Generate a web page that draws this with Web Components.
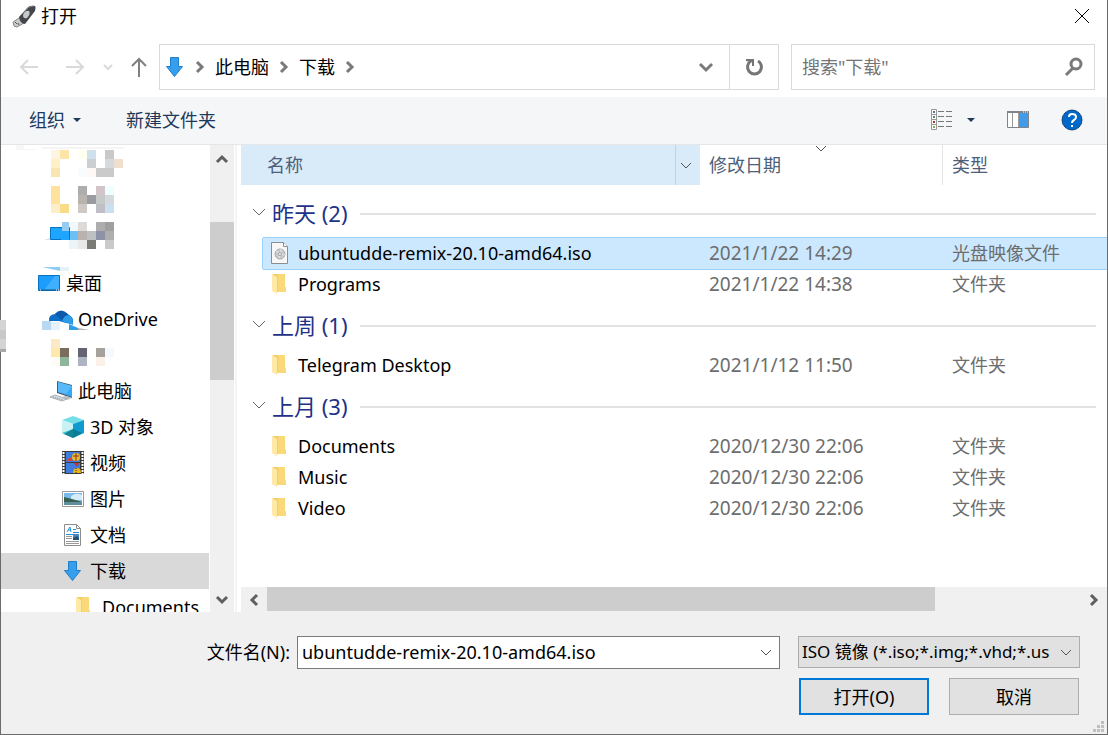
<!DOCTYPE html>
<html lang="zh-CN">
<head>
<meta charset="utf-8">
<meta name="viewport" content="width=device-width, initial-scale=1">
<title>打开</title>
<style>
    html, body {
        margin: 0;
        height: 100%;
    }
    body {
        font: 18px/24px "Noto Sans", "Noto Sans CJK SC", sans-serif;
        color: #000;
        background: #fff;
    }
</style>
</head>
<body>

<file-dialog>
    <title-bar slot="title">打开</title-bar>
    <nav-bar slot="nav"></nav-bar>
    <command-bar slot="commands"></command-bar>
    <nav-tree slot="tree">
        <tree-mosaic part-name="top"></tree-mosaic>
        <tree-item icon="desktop" level="0">桌面</tree-item>
        <tree-item icon="onedrive" level="1">OneDrive</tree-item>
        <tree-mosaic part-name="row"></tree-mosaic>
        <tree-item icon="pc" level="1">此电脑</tree-item>
        <tree-item icon="cube" level="2">3D 对象</tree-item>
        <tree-item icon="film" level="2">视频</tree-item>
        <tree-item icon="picture" level="2">图片</tree-item>
        <tree-item icon="document" level="2">文档</tree-item>
        <tree-item icon="download" level="2" selected>下载</tree-item>
        <tree-item icon="folder" level="3">Documents</tree-item>
    </nav-tree>
    <file-list slot="files"></file-list>
    <dialog-footer slot="footer"></dialog-footer>
</file-dialog>

<script>
// every icon is [viewBox width, viewBox height, markup]
const icons = {
    usb: [24, 24, `
        <path d="M1 18l6-4 5 5-7 4-3-1z" fill="#c9c9c9" stroke="#8b8b8b"/>
        <path d="M3 18l2 2M6 19l1 2" stroke="#555"/>
        <path d="M7 13L16 3q3-2 7-1 1 1 0 5L13 20q-5 0-6-7z" fill="#43474b"/>
        <path d="M8 12l9-9 5-1" fill="none" stroke="#7d8184"/>
        <path d="M11 11q2-5 6-4 2 3-2 7-4 1-4-3z" fill="#c8c8c8"/>`],
    close: [16, 16, `<path d="M1 1l14 14M15 1L1 15" stroke="#000" fill="none"/>`],
    back: [20, 20, `<path d="M19 10H2M9 3L2 10l7 7" fill="none" stroke="#d9d9d9" stroke-width="2"/>`],
    forward: [20, 20, `<path d="M1 10h17M11 3l7 7-7 7" fill="none" stroke="#d9d9d9" stroke-width="2"/>`],
    recent: [10, 10, `<path d="M1 3l4 4 4-4" fill="none" stroke="#d9d9d9" stroke-width="2"/>`],
    up: [16, 20, `<path d="M8 20V2M1 9l7-7 7 7" fill="none" stroke="#808080" stroke-width="2"/>`],
    crumb: [8, 12, `<path d="M1 1l5 5-5 5" fill="none" stroke="#7a7a7a" stroke-width="3"/>`],
    drop: [14, 10, `<path d="M1 2l6 6 6-6" fill="none" stroke="#7a7a7a" stroke-width="3"/>`],
    refresh: [18, 18, `<path d="M13 3a7 7 0 1 1-7 0" fill="none" stroke="#757575" stroke-width="3"/><path d="M1 1h8v7H7L7 4 1 3z" fill="#757575"/>`],
    search: [18, 18, `<circle cx="12" cy="6" r="5" fill="none" stroke="#7a7a7a" stroke-width="3"/><path d="M9 10l-7 7" stroke="#7a7a7a" stroke-width="3"/>`],
    caret: [8, 4, `<path d="M0 0h8L4 4z" fill="#1e395b"/>`],
    chevron: [14, 8, `<path d="M1 1l6 6 6-6" fill="none" stroke="#666"/>`],
    smallChevron: [12, 7, `<path d="M1 1l5 5 5-5" fill="none" stroke="#555"/>`],
    arrowUp: [12, 10, `<path d="M1 9l5-5 5 5" fill="none" stroke="#5f5f5f" stroke-width="3"/>`],
    arrowDown: [12, 10, `<path d="M1 3l5 5 5-5" fill="none" stroke="#5f5f5f" stroke-width="3"/>`],
    arrowLeft: [10, 12, `<path d="M8 1L3 6l5 5" fill="none" stroke="#5f5f5f" stroke-width="3"/>`],
    arrowRight: [10, 12, `<path d="M2 1l5 5-5 5" fill="none" stroke="#5f5f5f" stroke-width="3"/>`],
    views: [22, 22, `
        <path d="M.5 .5h5v20h-5zM.5 5.500h5M.5 10.500h5M.5 15.500h5" fill="#fff" stroke="#999"/>
        <path d="M2 2h2v2H2z" fill="#49749b"/><path d="M2 7h2v2H2z" fill="#4b8a72"/><path d="M2 12h2v2H2z" fill="#b8302a"/><path d="M2 17h2v2H2z" fill="#8cae5a"/>
        <path d="M7 2.500h6m2 0h6M7 7.500h6m2 0h6M7 12.500h6m2 0h6M7 17.500h6m2 0h6" stroke="#777"/>`],
    preview: [22, 18, `
        <path d="M.5 .5h21v16H.5z" fill="#fff" stroke="#808389"/>
        <path d="M0 0h22v2H0z" fill="#808389"/><path d="M16 1h1m1 0h1m1 0h1" stroke="#fff"/>
        <path d="M5.500 2v14M11.500 2v14" stroke="#9b9b9b"/><path d="M12 2h9v14h-9z" fill="#429be6"/>`],
    help: [22, 22, `
        <circle cx="11" cy="11" r="10" fill="#0068c9" stroke="#174b80"/>
        <path d="M8 8q0-3 3-3 4 0 4 3 0 2-2 3t-2 3" fill="none" stroke="#fff" stroke-width="2"/><path d="M10 16h2v2h-2z" fill="#fff"/>`],
    folder: [24, 24, `
        <path d="M3 2h12v13l1 1v4H3z" fill="#f4cd69"/><path d="M8 2h7v13l1 1v4H8z" fill="#f9d978"/>
        <path d="M2 2l5 3v17l-5-3z" fill="#ffe9a6"/>`],
    iso: [18, 22, `
        <path d="M.5 .5h12l4 4v17H.5z" fill="#f7f7f7" stroke="#8d8d8d"/><path d="M12.500 .5v4h4" fill="#fff" stroke="#8d8d8d"/>
        <circle cx="9" cy="12" r="5" fill="#c8cbcc" stroke="#a7abad"/><path d="M5 9l4 3-1 4M10 7v5l4 1" fill="none" stroke="#e7e9ea"/><circle cx="9" cy="12" r="1.500" fill="#fff" stroke="#9c9c9c"/>`],
    desktop: [24, 24, `
        <path d="M.5 4.500h21v15H.5z" fill="#1c9cfc" stroke="#0673c2"/><path d="M6 19L17 5h4v14z" fill="#3fb0ff"/>
        <path d="M1 19h20" stroke="#0b5a98"/><path d="M2 19h1m15 0h1m1 0h1" stroke="#fff"/>`],
    onedrive: [28, 24, `
        <path d="M-1 14q-1-6 6-7 5-6 12 0 7 2 6 10l-7-1-7-2z" fill="#0f6fc8"/>
        <path d="M5 7q6-7 13 0l1 2-6 5z" fill="#0a59ab"/><path d="M12 14q2-6 7-6 4 2 4 10l-3-1z" fill="#2b9de8"/>
        <path d="M-8 14h9v9h-9z" fill="#b8d8f3"/><path d="M1 15h9v8H1z" fill="#e3f2fb"/>
        <path d="M19 17l9 4v2h-9z" fill="#2ca0e8"/><path d="M28 21l12 2H28z" fill="#b8b5b0"/>`],
    pc: [24, 24, `
        <path d="M7 2l15 4v13L7 14z" fill="#4a5c6b"/><path d="M8 3l14 4v11L8 13z" fill="#35a9f7"/><path d="M8 3l14 4-6 8-8-2z" fill="#5abaf9"/>
        <path d="M12 18l4-1 6 2-5 2z" fill="#b8c0c6"/><path d="M0 18l5-2 12 4-5 2z" fill="#d4d9dc" stroke="#aab3ba"/><path d="M3 18l10 3" stroke="#8e989e" stroke-dasharray="1 1"/>`],
    cube: [24, 24, `
        <path d="M11 1l11 4-11 4L0 5z" fill="#74dfe8"/><path d="M0 5l11 4v14L0 18z" fill="#c8f2f4"/>
        <path d="M11 9l11-4v13l-11 5z" fill="#109bd0"/><path d="M0 18l11-4v9z" fill="#3dc3d0"/><path d="M11 14l9 4-9 5-9-4z" fill="#0b7485" opacity=".8"/>`],
    film: [24, 24, `
        <path d="M0 0h22v23H0z" fill="#3a3a3a"/><path d="M4 1h14v10H4zM4 12h14v10H4z" fill="#3e7ce0"/>
        <path d="M1.500 1v22M20.500 1v22" stroke="#fff" stroke-width="2" stroke-dasharray="2 1"/>
        <path d="M4 10l4-4 3 4z" fill="#d8443d"/><circle cx="14" cy="6" r="4" fill="#e9bd2b"/><path d="M14 2v8M11 5h6" stroke="#8d3325"/>
        <path d="M12 12h5l-2 4z" fill="#c7352e"/><path d="M11 22q0-5 4-5t4 5z" fill="#e4b51d"/><path d="M14 17v5" stroke="#54331c" stroke-dasharray="1 1"/>`],
    picture: [24, 24, `
        <path d="M.5 4.500h21v15H.5z" fill="#fff" stroke="#999"/><path d="M2 6h18v12H2z" fill="#79b9ec"/>
        <path d="M9 9q5-4 11-1v5H9z" fill="#d6ebf6"/><path d="M2 10q9 2 18 5v1H2z" fill="#35614e"/><path d="M2 15h18v3H2z" fill="#5f8f9c"/>`],
    document: [24, 24, `
        <path d="M2.500 1.500h12l4 4v17h-16z" fill="#fff" stroke="#8c8c8c"/><path d="M14.500 1.500v4h4" fill="none" stroke="#8c8c8c"/>
        <path d="M5 9l3-5 1 5M6 7h3M11 6.500h3M11 9.500h6M4 11.500h13" fill="none" stroke="#2492d7"/>
        <path d="M4 13.500h6M4 15.500h6M4 18.500h13M4 20.500h13" stroke="#999"/><path d="M11 11h6v6h-6z" fill="#4b87bb"/><path d="M11 15l4-2 2 2v2h-6z" fill="#245273"/>`],
    download: [24, 24, `<path d="M6.500 2.500h8v9h4L10.500 21.500l-8-10h4z" fill="#379ded" stroke="#1f7fc8"/>`],
    grip: [12, 12, `<path d="M8 0h3v3H8zM4 4h3v3H4zM8 4h3v3H8zM0 8h3v3H0zM4 8h3v3H4zM8 8h3v3H8z" fill="#bfbfbf"/>`]
};

// small helper: attaches the shadow root and fills it from a template
function render(host, html) {
    const template = document.createElement('template');
    template.innerHTML = html;
    host.attachShadow({ mode: 'open' }).appendChild(template.content.cloneNode(true));
}

class UiIcon extends HTMLElement {
    connectedCallback() {
        if (this.shadowRoot) return;
        const [w, h, body] = icons[this.getAttribute('name')];
        render(this, `
            <style>
                :host { display: block; flex: none; width: ${w}px; height: ${h}px; }
                svg { display: block; overflow: visible; }
            </style>
            <svg width="${w}" height="${h}" viewBox="0 0 ${w} ${h}" aria-hidden="true">${body}</svg>`);
    }
}

class FileDialog extends HTMLElement {
    constructor() {
        super();
        render(this, `
            <style>
                :host {
                    box-sizing: border-box;
                    display: flex;
                    flex-direction: column;
                    height: 100vh;
                    border: 1px solid #6b6b6b;
                    border-top: 0;
                }
                .body {
                    flex: 1;
                    display: flex;
                    min-height: 0;
                }
                .splitter {
                    width: 4px;
                    margin: 0 2px 0 1px;
                    box-sizing: border-box;
                    border-left: 2px solid #f4f5f6;
                }
                .edge {
                    position: absolute;
                    left: 0;
                    top: 320px;
                    width: 6px;
                    height: 32px;
                    background: linear-gradient(#d4d4d4 30%, #c8c8c8 30% 60%, #d4d4d4 60% 90%, #a8a8a8 90%);
                }
            </style>
            <slot name="title"></slot>
            <slot name="nav"></slot>
            <slot name="commands"></slot>
            <div class="body">
                <slot name="tree"></slot>
                <div class="splitter"></div>
                <slot name="files"></slot>
            </div>
            <slot name="footer"></slot>
            <div class="edge"></div>`);
    }
}

class TitleBar extends HTMLElement {
    constructor() {
        super();
        render(this, `
            <style>
                :host { display: flex; align-items: center; height: 32px; padding: 0 17px 0 11px; }
                h1 { flex: 1; margin: 0 0 0 5px; font: inherit; }
                button { padding: 0; border: 0; background: none; }
            </style>
            <ui-icon name="usb"></ui-icon>
            <h1><slot></slot></h1>
            <button aria-label="关闭"><ui-icon name="close"></ui-icon></button>`);
    }
}

class NavBar extends HTMLElement {
    constructor() {
        super();
        render(this, `
            <style>
                :host { display: flex; align-items: center; height: 46px; padding: 12px 12px 7px 18px; }
                button { display: grid; place-items: center; flex: none; padding: 0; border: 0; background: none; }
                a { color: inherit; text-decoration: none; }
                .arrows { display: flex; align-items: center; gap: 18px; width: 140px; }
                .arrows button:nth-child(2) { margin-left: 8px; }
                .address, .search {
                    box-sizing: border-box;
                    display: flex;
                    align-items: center;
                    height: 46px;
                    border: 1px solid #d9d9d9;
                }
                .address { flex: 1; padding-left: 4px; margin-right: 12px; }
                .crumbs { flex: 1; display: flex; align-items: center; gap: 11px; padding-left: 8px; }
                .open { width: 46px; height: 44px; }
                .refresh { width: 49px; height: 44px; border-left: 1px solid #d9d9d9; }
                .search { width: 304px; padding: 0 12px 0 10px; }
                input {
                    flex: 1;
                    min-width: 0;
                    padding: 0;
                    border: 0;
                    outline: 0;
                    font: inherit;
                    background: none;
                }
                input::placeholder { color: #757575; opacity: 1; }
            </style>
            <div class="arrows">
                <button aria-label="后退"><ui-icon name="back"></ui-icon></button>
                <button aria-label="前进"><ui-icon name="forward"></ui-icon></button>
                <button aria-label="最近浏览的位置"><ui-icon name="recent"></ui-icon></button>
                <button aria-label="上移"><ui-icon name="up"></ui-icon></button>
            </div>
            <div class="address">
                <ui-icon name="download"></ui-icon>
                <nav class="crumbs">
                    <ui-icon name="crumb"></ui-icon>
                    <a href="#pc">此电脑</a>
                    <ui-icon name="crumb"></ui-icon>
                    <a href="#downloads">下载</a>
                    <ui-icon name="crumb"></ui-icon>
                </nav>
                <button class="open" aria-label="以前的位置"><ui-icon name="drop"></ui-icon></button>
                <button class="refresh" aria-label="刷新"><ui-icon name="refresh"></ui-icon></button>
            </div>
            <div class="search">
                <input type="text" aria-label="搜索" placeholder='搜索"下载"'>
                <button aria-label="开始搜索"><ui-icon name="search"></ui-icon></button>
            </div>`);
    }
}

class CommandBar extends HTMLElement {
    constructor() {
        super();
        render(this, `
            <style>
                :host {
                    display: flex;
                    align-items: center;
                    height: 45px;
                    padding: 0 24px 2px 28px;
                    border-bottom: 1px solid #e5e6e8;
                    background: #f4f6f8;
                    color: #1e395b;
                }
                button {
                    display: flex;
                    align-items: center;
                    gap: 8px;
                    padding: 0;
                    border: 0;
                    background: none;
                    color: inherit;
                    font: inherit;
                }
                .new { margin: 0 auto 0 45px; }
                .views { gap: 14px; }
                .preview, .help { margin-left: 32px; }
            </style>
            <button>组织<ui-icon name="caret"></ui-icon></button>
            <button class="new">新建文件夹</button>
            <button class="views" aria-label="更改您的视图"><ui-icon name="views"></ui-icon><ui-icon name="caret"></ui-icon></button>
            <button class="preview" aria-label="显示预览窗格"><ui-icon name="preview"></ui-icon></button>
            <button class="help" aria-label="获取帮助"><ui-icon name="help"></ui-icon></button>`);
    }
}

// before / size / after are the shares of the track around the thumb
class ScrollStrip extends HTMLElement {
    connectedCallback() {
        if (this.shadowRoot) return;
        const across = this.hasAttribute('horizontal');
        const share = name => this.getAttribute(name);
        render(this, `
            <style>
                :host {
                    display: flex;
                    flex: none;
                    flex-direction: ${across ? 'row' : 'column'};
                    ${across ? 'height: 25px' : 'width: 24px'};
                    background: #f0f0f0;
                }
                button {
                    display: grid;
                    place-items: center;
                    flex: none;
                    ${across ? 'width' : 'height'}: 26px;
                    padding: 0;
                    border: 0;
                    background: none;
                }
                .before { flex: ${share('before')} 1 0; }
                .thumb { flex: ${share('size')} 1 0; background: #cdcdcd; ${across ? 'margin-bottom: 1px' : ''}; }
                .after { flex: ${share('after')} 1 0; }
            </style>
            <button aria-label="向前滚动"><ui-icon name="${across ? 'arrowLeft' : 'arrowUp'}"></ui-icon></button>
            <div class="before"></div>
            <div class="thumb"></div>
            <div class="after"></div>
            <button aria-label="向后滚动"><ui-icon name="${across ? 'arrowRight' : 'arrowDown'}"></ui-icon></button>`);
    }
}

class NavTree extends HTMLElement {
    constructor() {
        super();
        render(this, `
            <style>
                :host { display: flex; flex: none; width: 233px; }
                nav { flex: 1; min-width: 0; overflow: hidden; padding-right: 1px; }
            </style>
            <nav><slot></slot></nav>
            <scroll-strip before="51" size="158" after="206"></scroll-strip>`);
    }
}

class TreeItem extends HTMLElement {
    connectedCallback() {
        if (this.shadowRoot) return;
        render(this, `
            <style>
                :host { display: block; }
                :host([selected]) { background: #d9d9d9; }
                a {
                    display: flex;
                    align-items: center;
                    gap: 4px;
                    height: 36px;
                    padding-left: ${37 + 12 * this.getAttribute('level')}px;
                    color: inherit;
                    text-decoration: none;
                    white-space: nowrap;
                }
                ui-icon { width: 24px; }
            </style>
            <a href="#"><ui-icon name="${this.getAttribute('icon')}"></ui-icon><slot></slot></a>`);
    }
}

// censored entries: 9px squares, [x, y, fill]
const mosaics = {
    top: [120, [
        [59, 5, '#fce5a6'], [50, 5, '#fdf5e0'], [77, 5, '#fffff0'], [86, 5, '#cfe0ef'], [104, 5, '#c9c9c9'],
        [50, 14, '#fff0c8'], [86, 14, '#cbcfd2'], [104, 14, '#d5dade'], [113, 14, '#f0dfcc'],
        [50, 23, '#f9e5b0'], [77, 23, '#f8fcff'], [86, 23, '#fff8f5'], [95, 23, '#cacaca'], [104, 23, '#cacaca'],
        [50, 41, '#ffe39c'], [77, 41, '#adadad'], [95, 41, '#d2c4c8'], [104, 41, '#eeffff'],
        [50, 50, '#ffe39c'], [77, 50, '#b9b3ae'], [86, 50, '#999ba0'], [95, 50, '#c5cac9'], [104, 50, '#d5d9dd'],
        [50, 59, '#fbeec8'], [59, 59, '#f8dc87'], [77, 59, '#cfc9c6'], [95, 59, '#c1bfc6'], [104, 59, '#ccdff0'],
        [68, 77, '#f0f8fd'], [77, 77, '#dedad8'], [95, 77, '#adadad'], [104, 77, '#9f9f9f'],
        [68, 86, '#6cc0f5'], [77, 86, '#bab2ae'], [86, 86, '#bdc1c1'], [95, 86, '#8d92a6'], [104, 86, '#aeaeae'],
        [68, 95, '#eaf4f9'], [77, 95, '#e9e9e9'], [86, 95, '#7a7b75'], [104, 95, '#cacaca']
    ], `<path d="M15 0h20v5H15z" fill="#f7f7f8"/><path d="M41 2h82v2H41z" fill="#f5f5f5"/>
        <path d="M23 0h12v4H23z" fill="#fff"/>
        <path d="M49.500 82.500h19v12h-19z" fill="#1da5ff" stroke="#0673c2"/><path d="M61 77h7v9h-7z" fill="#95ccf0"/><path d="M60 86h8v9h-8z" fill="#1da5ff"/>
        <path d="M43 95l6-2v2z" fill="#d5e2ea"/><path d="M41 122h18v4z" fill="#8fccf2"/><path d="M59 122h9v4h-9z" fill="#e5f3f8"/>`],
    row: [36, [
        [50, 2, '#fbeac5'],
        [50, 11, '#ffe8ac'], [59, 11, '#7a6d5c'], [77, 11, '#656272'], [95, 11, '#a7a19b'], [104, 11, '#f3f9ff'],
        [50, 20, '#fefdf5'], [59, 20, '#8db69a'], [77, 20, '#aeb4c3'], [95, 20, '#faf1e8']
    ], '']
};

class TreeMosaic extends HTMLElement {
    connectedCallback() {
        if (this.shadowRoot) return;
        const [height, squares, extra] = mosaics[this.getAttribute('part-name')];
        render(this, `
            <style>
                :host { display: block; height: ${height}px; }
                svg { display: block; overflow: visible; }
            </style>
            <svg width="130" height="${height}" aria-hidden="true">
                ${squares.map(([x, y, fill]) => `<rect x="${x}" y="${y}" width="9" height="9" fill="${fill}"/>`).join('')}
                ${extra}
            </svg>`);
    }
}

const groups = [
    { name: '昨天', files: [
        ['iso', 'ubuntudde-remix-20.10-amd64.iso', '2021/1/22 14:29', '光盘映像文件', true],
        ['folder', 'Programs', '2021/1/22 14:38', '文件夹']
    ] },
    { name: '上周', files: [
        ['folder', 'Telegram Desktop', '2021/1/12 11:50', '文件夹']
    ] },
    { name: '上月', files: [
        ['folder', 'Documents', '2020/12/30 22:06', '文件夹'],
        ['folder', 'Music', '2020/12/30 22:06', '文件夹'],
        ['folder', 'Video', '2020/12/30 22:06', '文件夹']
    ] }
];

class FileName extends HTMLElement {
    connectedCallback() {
        if (this.shadowRoot) return;
        render(this, `
            <style>
                :host { display: flex; align-items: center; gap: 2px; padding-left: 7px; color: #000; }
                .icon { display: grid; align-items: center; width: 26px; }
                ui-icon[name="iso"] { margin-left: 1px; }
            </style>
            <span class="icon"><ui-icon name="${this.getAttribute('icon')}"></ui-icon></span>
            <slot></slot>`);
    }
}

class FileList extends HTMLElement {
    constructor() {
        super();
        render(this, `
            <style>
                :host { display: flex; flex: 1; flex-direction: column; min-width: 0; }
                .scroller { flex: 1; min-height: 0; overflow: hidden; }
                table { width: 100%; border-collapse: separate; border-spacing: 0; table-layout: fixed; }
                .gutter { width: 22px; }
                .name { width: 437px; }
                .date { width: 243px; }
                th, td { padding: 0; text-align: left; font-weight: inherit; white-space: nowrap; overflow: hidden; }
                thead th { height: 40px; color: #4c607a; }
                thead .sorted { background: #d9ebf9; }
                .head { display: flex; align-items: center; height: 40px; padding-left: 26px; }
                .head button {
                    display: grid;
                    align-items: center;
                    box-sizing: border-box;
                    width: 25px;
                    height: 40px;
                    margin-left: auto;
                    padding: 0 0 0 4px;
                    border: 0;
                    border-left: 1px solid #bfd2e0;
                    background: none;
                }
                .with-mark { position: relative; box-sizing: border-box; border-right: 1px solid #e5e5e5; }
                .with-mark ui-icon { position: absolute; top: 0; left: 50%; margin-left: -6px; }
                th.pad, td.pad { padding-left: 9px; }
                td, td.pad { box-sizing: border-box; height: 31px; padding-bottom: 2px; color: #6d6d6d; overflow: visible; }
                td.when { font-size: 19px; }
                tbody.first::before { content: ""; display: table-row; height: 3px; }
                .group {
                    display: flex;
                    align-items: center;
                    box-sizing: border-box;
                    height: 50px;
                    padding: 2px 11px 0 11px;
                    color: #1e3287;
                    font-size: 22px;
                }
                .group button { margin: 0 6px 4px 0; padding: 0; border: 0; background: none; }
                .group span { margin-bottom: 2px; }
                .group::after { content: ""; flex: 1; height: 2px; margin-left: 12px; background: #e2e2e2; }
                .selected td:not(.gutter) { background: #cce8ff; box-shadow: 0 -1px #99d1ff, 0 1px #99d1ff; }
                .selected td.cell { box-shadow: 0 -1px #99d1ff, 0 1px #99d1ff, -1px 0 #99d1ff; }
            </style>
            <div class="scroller">
                <table>
                    <colgroup><col class="gutter"><col class="name"><col class="date"><col></colgroup>
                    <thead>
                        <tr>
                            <th class="sorted" colspan="2"><div class="head">名称<button aria-label="筛选"><ui-icon name="smallChevron"></ui-icon></button></div></th>
                            <th class="pad with-mark">修改日期<ui-icon name="smallChevron"></ui-icon></th>
                            <th class="pad">类型</th>
                        </tr>
                    </thead>
                    ${groups.map((group, index) => this.groupRows(group, index)).join('')}
                </table>
            </div>
            <scroll-strip horizontal before="0" size="668" after="146"></scroll-strip>`);
    }

    groupRows(group, index) {
        return `
            <tbody class="${index ? '' : 'first'}">
                <tr>
                    <th colspan="4" scope="rowgroup"><div class="group">
                        <button aria-label="折叠"><ui-icon name="chevron"></ui-icon></button>
                        <span>${group.name} (${group.files.length})</span>
                    </div></th>
                </tr>
                ${group.files.map(([icon, name, date, type, selected]) => `
                <tr class="${selected ? 'selected' : ''}">
                    <td class="gutter"></td>
                    <td class="cell"><file-name icon="${icon}">${name}</file-name></td>
                    <td class="pad when">${date}</td>
                    <td class="pad">${type}</td>
                </tr>`).join('')}
            </tbody>`;
    }
}

class DialogFooter extends HTMLElement {
    constructor() {
        super();
        render(this, `
            <style>
                :host { display: block; padding: 24px 27px 19px 0; background: #f0f0f0; position: relative; }
                .row { display: flex; align-items: flex-start; }
                label { width: 289px; margin-right: 7px; line-height: 32px; text-align: right; }
                .combo { flex: 1; display: flex; margin-right: 18px; border: 1px solid #7a7a7a; background: #fff; min-width: 0; }
                input { flex: 1; min-width: 0; height: 31px; box-sizing: border-box; padding: 0 4px 2px; border: 0; outline: 0; font: inherit; background: none; }
                .combo button { width: 26px; display: grid; place-items: center; padding: 0; border: 0; background: none; }
                .type { display: grid; width: 282px; align-items: center; }
                .type > * { grid-area: 1 / 1; }
                .type ui-icon { justify-self: end; margin-right: 8px; pointer-events: none; }
                select {
                    appearance: none;
                    box-sizing: border-box;
                    width: 100%;
                    height: 32px;
                    padding: 0 27px 0 3px;
                    border: 1px solid #adadad;
                    border-radius: 0;
                    background: #e1e1e1;
                    color: inherit;
                    font: inherit;
                    font-size: 17px;
                }
                .actions { justify-content: flex-end; gap: 20px; padding: 9px 1px 0 0; }
                .actions button {
                    box-sizing: border-box;
                    width: 130px;
                    height: 37px;
                    padding: 0;
                    border: 1px solid #adadad;
                    background: #e1e1e1;
                    color: inherit;
                    font: inherit;
                }
                .actions .default { border: 2px solid #0078d7; }
                .grip { position: absolute; right: 2px; bottom: 1px; }
            </style>
            <div class="row">
                <label for="filename">文件名(N):</label>
                <div class="combo">
                    <input id="filename" type="text" value="ubuntudde-remix-20.10-amd64.iso">
                    <button aria-label="显示列表"><ui-icon name="smallChevron"></ui-icon></button>
                </div>
                <div class="type">
                    <select aria-label="文件类型"><option>ISO 镜像 (*.iso;*.img;*.vhd;*.us</option></select>
                    <ui-icon name="smallChevron"></ui-icon>
                </div>
            </div>
            <div class="row actions">
                <button class="default">打开(O)</button>
                <button>取消</button>
            </div>
            <ui-icon class="grip" name="grip"></ui-icon>`);
    }
}

customElements.define('ui-icon', UiIcon);
customElements.define('scroll-strip', ScrollStrip);
customElements.define('file-dialog', FileDialog);
customElements.define('title-bar', TitleBar);
customElements.define('nav-bar', NavBar);
customElements.define('command-bar', CommandBar);
customElements.define('nav-tree', NavTree);
customElements.define('tree-item', TreeItem);
customElements.define('tree-mosaic', TreeMosaic);
customElements.define('file-name', FileName);
customElements.define('file-list', FileList);
customElements.define('dialog-footer', DialogFooter);
</script>
</body>
</html>
